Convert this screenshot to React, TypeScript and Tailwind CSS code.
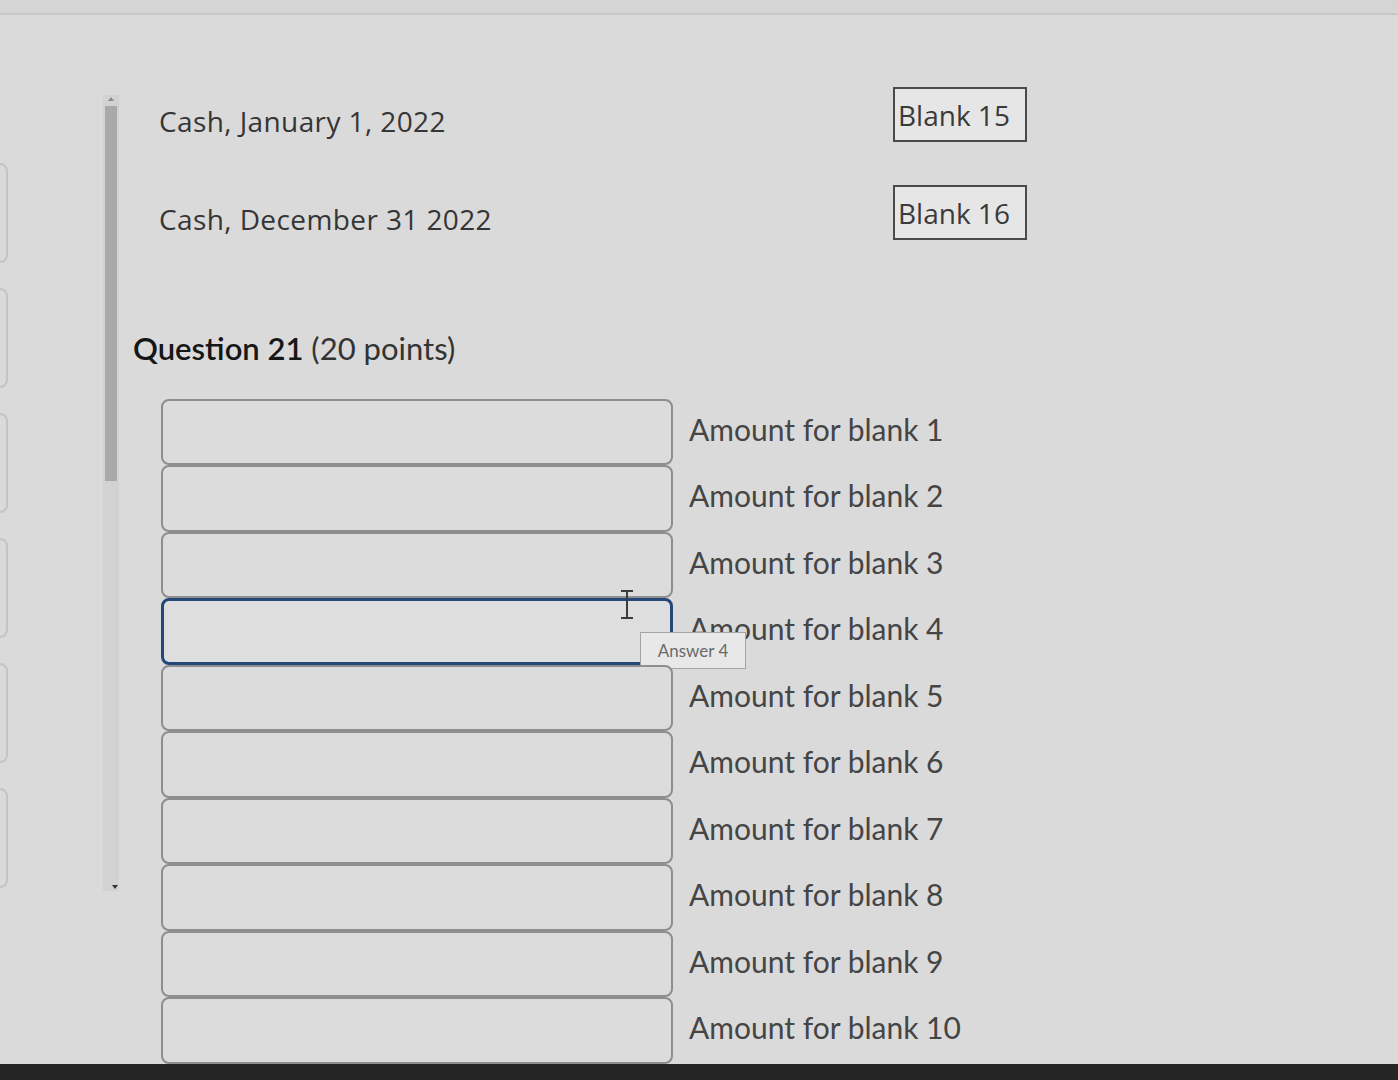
import { Fragment } from "react";

const blanks = [1, 2, 3, 4, 5, 6, 7, 8, 9, 10];
const sideCards = [0, 1, 2, 3, 4, 5];

function CashRow({ label, blank }: { label: string; blank: string }) {
  return (
    <div className="flex flex-row items-center justify-between w-[868px]">
      <span className="mt-[12px] text-[28px] tracking-[0.4px] text-[#353535]">{label}</span>
      <div className="h-[55px] w-[134px] border-2 border-[#4a4a4a] bg-[#e6e6e6] flex items-center pl-[3px]">
        <span className="text-[28px] text-[#3a3a3a]">{blank}</span>
      </div>
    </div>
  );
}

function AnswerRow({ n }: { n: number }) {
  const focused = n === 4;
  return (
    <div className="relative flex flex-row items-center h-[66.5px]">
      <div
        className={
          focused
            ? "h-full w-[512px] rounded-[8px] border-[3px] border-[#24467a] bg-[#dedede]"
            : "h-full w-[512px] rounded-[8px] border-2 border-[#8e8e8e] bg-[#dcdcdc]"
        }
      />
      <span className="ml-[16px] mb-[6px] font-['Lato'] text-[30px] text-[#454545]">
        Amount for blank {n}
      </span>
      {focused ? (
        <Fragment>
          <svg
            className="absolute left-[458px] top-[-9px]"
            width="16"
            height="32"
            viewBox="0 0 16 32"
          >
            <path
              d="M2 2 H14 M8 2 V29 M2 29 H14"
              stroke="#3c3c3c"
              strokeWidth="2"
              fill="none"
            />
          </svg>
          <div className="absolute left-[479px] top-[34px] h-[37px] w-[106px] border border-[#a5a5a5] bg-[#e8e8e8] flex items-center justify-center">
            <span className="font-['Lato'] text-[17px] text-[#6a6a6a]">Answer 4</span>
          </div>
        </Fragment>
      ) : null}
    </div>
  );
}

export default function App() {
  return (
    <div className="w-[1398px] h-[1080px] overflow-hidden flex flex-col bg-[#dadada] font-['Open_Sans',sans-serif]">
      <div className="h-[16px] border-b-2 border-[#c8c8c8] bg-[#d5d5d5]" />

      <div className="flex flex-row flex-1">
        {/* cut-off cards on the left edge */}
        <div className="flex flex-col w-[10px] pt-[148px] gap-[25px] overflow-hidden">
          {sideCards.map((c) => (
            <div
              key={c}
              className="-ml-[20px] h-[100px] w-[28px] rounded-[8px] border-2 border-[#c4c4c4]"
            />
          ))}
        </div>

        {/* scrollbar */}
        <div className="ml-[93px] mt-[80px] w-[16px] h-[796px] flex flex-col items-center bg-[#d2d2d2]">
          <svg width="8" height="8" viewBox="0 0 8 8" className="mb-[3px]">
            <path d="M1 6 L4 2 L7 6 Z" fill="#8a8a8a" />
          </svg>
          <div className="w-[12px] h-[375px] bg-[#a9a9a9]" />
          <div className="flex-1" />
          <svg width="8" height="8" viewBox="0 0 8 8" className="ml-[8px]">
            <path d="M1 2 L4 6 L7 2 Z" fill="#333" />
          </svg>
        </div>

        {/* question content */}
        <div className="ml-[14px] flex flex-col">
          <div className="ml-[26px] mt-[72px] flex flex-col gap-[43px]">
            <CashRow label="Cash, January 1, 2022" blank="Blank 15" />
            <CashRow label="Cash, December 31 2022" blank="Blank 16" />
          </div>

          <div className="mt-[85px] font-['Lato'] text-[31px] text-[#161616]">
            <span className="font-semibold">Question 21</span>
            <span className="text-[#333]"> (20 points)</span>
          </div>

          <div className="ml-[28px] mt-[27px] flex flex-col">
            {blanks.map((n) => (
              <AnswerRow key={n} n={n} />
            ))}
          </div>
        </div>
      </div>

      <div className="h-[17px] bg-[#252525]" />
    </div>
  );
}
